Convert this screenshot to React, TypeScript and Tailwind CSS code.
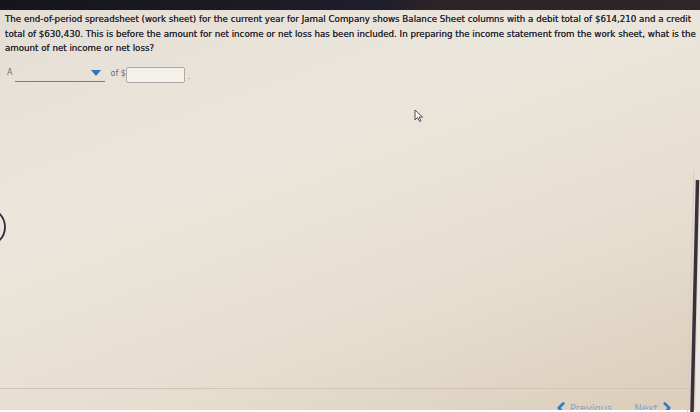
import React from 'react';
import { ChevronLeft, ChevronRight } from 'lucide-react';

const lines = [
  'The end-of-period spreadsheet (work sheet) for the current year for Jamal Company shows Balance Sheet columns with a debit total of $614,210 and a credit',
  'total of $630,430. This is before the amount for net income or net loss has been included. In preparing the income statement from the work sheet, what is the',
  'amount of net income or net loss?',
];

const App = () => {
  return (
    <div className="relative h-[412px] w-[700px] overflow-hidden bg-[linear-gradient(160deg,#e4ddd3_0%,#ebe6dc_35%,#e6ddcf_70%,#dacdb9_100%)] font-['DejaVu_Sans',sans-serif]">
      <div className="flex h-full flex-col">
        {/* top bezel */}
        <div className="h-[10px] bg-[linear-gradient(90deg,#15151b_0%,#1f1e2b_55%,#2d2327_62%,#2f2428_100%)]" />

        <div className="px-[5px] pt-[2px] text-[8.7px] leading-[14.6px] text-[#2a2a34] [text-shadow:0_0_0.3px_#2a2a34]">
          {lines.map((l, i) => (
            <p key={i} className="whitespace-nowrap">{l}</p>
          ))}
        </div>

        {/* answer row */}
        <div className="mt-[11px] flex items-center pl-[7px] text-[8px] text-[#6b6b73]">
          <span className="mb-[3px]">A</span>
          <div className="relative ml-[3px] h-[15px] w-[90px] border-b border-[#5a84bd]">
            <span className="absolute right-[4px] top-[3px] h-0 w-0 border-x-[5px] border-t-[6px] border-x-transparent border-t-[#2f74c4]" />
          </div>
          <span className="ml-[5px] mb-[2px]">of $</span>
          <div className="h-[16px] w-[59px] rounded-[2px] border border-[#a9a9ad] bg-[#f4f1ea]" />
          <span className="ml-[3px] mt-[4px]">.</span>
        </div>

        {/* footer */}
        <div className="mt-auto h-[24px] border-t border-[#cfc6b8]">
          <div className="flex items-center pl-[552px] pt-[10px] text-[10px] text-[#8aa3bf]">
            <ChevronLeft size={18} strokeWidth={3.5} className="text-[#2f7bc8]" />
            <span>Previous</span>
            <span className="ml-[22px]">Next</span>
            <ChevronRight size={18} strokeWidth={3.5} className="text-[#2f7bc8]" />
          </div>
        </div>
      </div>

      {/* bottom cutoff strip */}
      <div className="absolute bottom-0 left-0 h-[2px] w-full bg-white" />

      {/* partial circle at left edge */}
      <svg className="absolute left-0 top-[205px]" width="12" height="44" viewBox="0 0 12 44">
        <path d="M-14 3 A19 19 0 0 1 -14 41" fill="none" stroke="#2d2736" strokeWidth="1.8" />
      </svg>

      {/* right bezel edge */}
      <svg className="absolute right-0 top-0" width="16" height="412" viewBox="0 0 16 412">
        <path d="M16 170 L11 412 L16 412 Z" fill="#ece8e6" />
        <path d="M13.5 180 L8 412" stroke="#3c2e3b" strokeWidth="3.5" />
        <path d="M10 170 L3.5 412" stroke="#d3cfcd" strokeWidth="1.2" />
      </svg>

      {/* mouse cursor */}
      <svg className="absolute left-[414px] top-[109px]" width="12" height="14" viewBox="0 0 12 14">
        <path d="M1 1 L1 11 L3.5 8.5 L5.5 12.5 L7 11.8 L5 8 L8.5 8 Z" fill="#fbfaf6" stroke="#3b3b44" strokeWidth="0.9" strokeLinejoin="round" />
      </svg>
    </div>
  );
};

export default App;
